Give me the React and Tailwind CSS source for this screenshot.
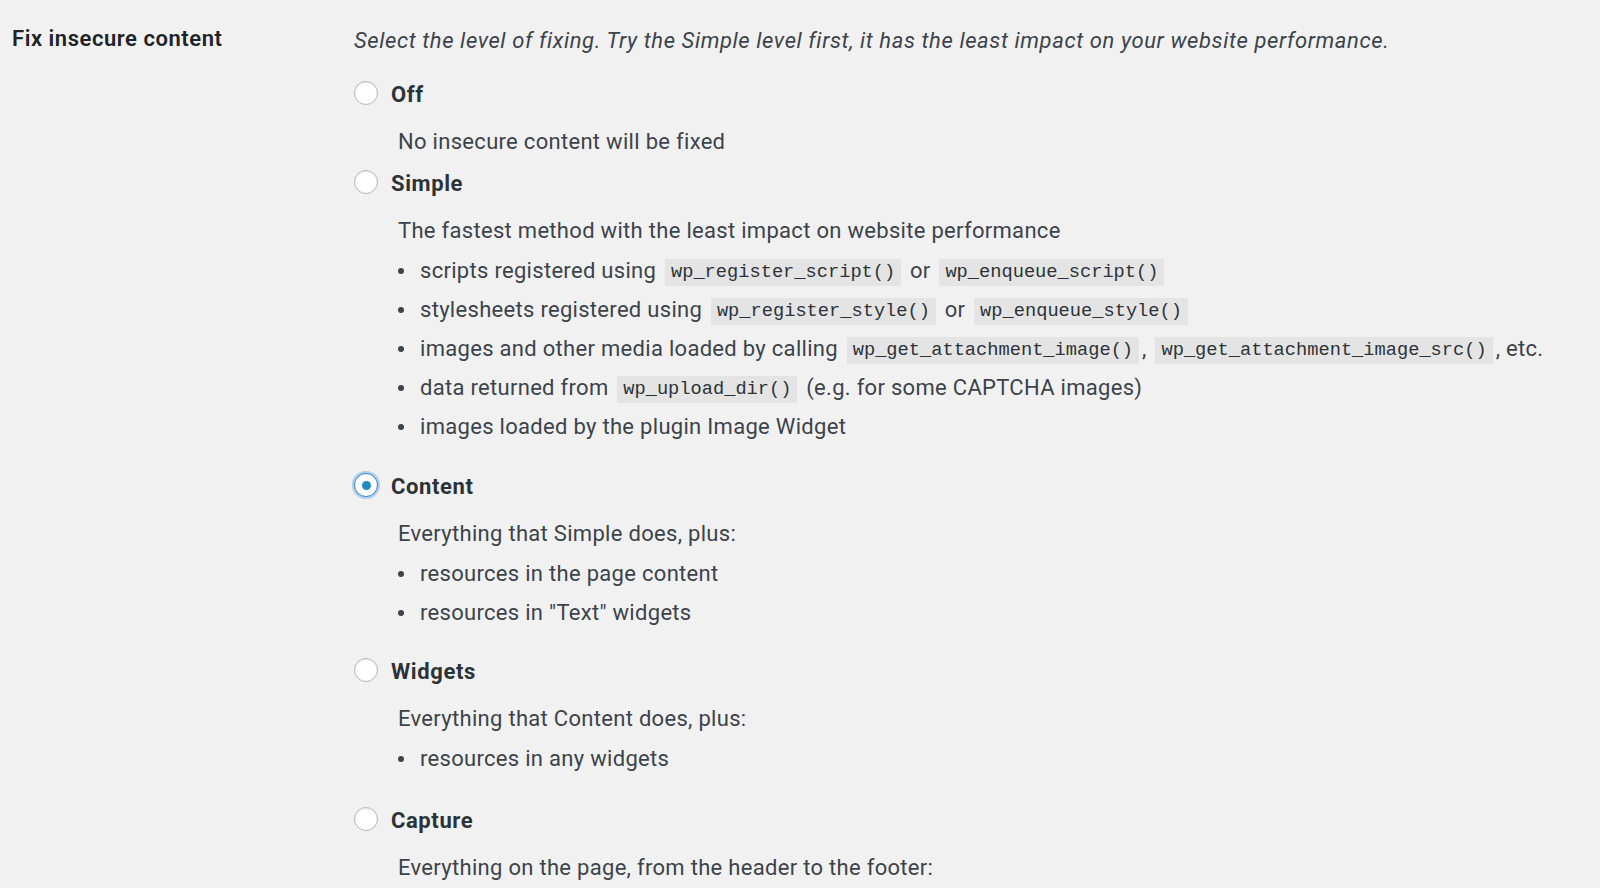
// Fix insecure content settings row

const Code = ({ children }) => (
  <code className="mx-[3px] inline-block h-[27px] bg-[#e4e4e4] px-[6px] align-middle font-['Liberation_Mono',monospace] text-[18.7px] leading-[27px] tracking-normal text-[#2c3338]">
    {children}
  </code>
);

const Radio = ({ checked }) =>
  checked ? (
    <span className="flex h-[24px] w-[24px] shrink-0 items-center justify-center rounded-full border border-[#3582c4] bg-white shadow-[0_0_0_2px_rgba(114,174,230,0.55)]">
      <span className="h-[9px] w-[9px] rounded-full bg-[#1e8cbe]" />
    </span>
  ) : (
    <span className="h-[24px] w-[24px] shrink-0 rounded-full border border-[#b4b6b9] bg-white shadow-[inset_0_1px_2px_rgba(0,0,0,0.08)]" />
  );

const Bullets = ({ items }) => (
  <ul className="ml-[44px]">
    {items.map((item, i) => (
      <li key={i} className="flex items-center leading-[39px]">
        <span className="mr-[16px] h-[6px] w-[6px] shrink-0 rounded-full bg-[#3c434a]" />
        <span>{item}</span>
      </li>
    ))}
  </ul>
);

function Option({ label, desc, items, checked, gap }) {
  return (
    <div className={gap}>
      <label className="flex h-[32px] items-center gap-[13px]">
        <Radio checked={checked} />
        <span className="pt-[3px] text-[22px] font-bold tracking-[0.6px] text-[#2c3338]">{label}</span>
      </label>
      <p className="ml-[44px] mt-[13px] leading-[40px]">{desc}</p>
      {items && <Bullets items={items} />}
    </div>
  );
}

export default function App() {
  const simpleItems = [
    <>scripts registered using <Code>wp_register_script()</Code> or <Code>wp_enqueue_script()</Code></>,
    <>stylesheets registered using <Code>wp_register_style()</Code> or <Code>wp_enqueue_style()</Code></>,
    <>images and other media loaded by calling <Code>wp_get_attachment_image()</Code>, <Code>wp_get_attachment_image_src()</Code>, etc.</>,
    <>data returned from <Code>wp_upload_dir()</Code> (e.g. for some CAPTCHA images)</>,
    <>images loaded by the plugin Image Widget</>,
  ];

  return (
    <div className="min-h-screen bg-[#f1f1f1] font-['Roboto',sans-serif] text-[22px] tracking-[0.3px] text-[#3c434a]">
      <div className="flex pt-[21px]">
        {/* Label column */}
        <div className="w-[354px] shrink-0 pl-[12px] text-[22px] font-semibold leading-[36px] tracking-[0.55px] text-[#1d2327]">
          Fix insecure content
        </div>

        {/* Options */}
        <div className="flex-1">
          <p className="italic leading-[40px] tracking-[0.6px] text-[#3c434a]">
            Select the level of fixing. Try the Simple level first, it has the least impact on your website performance.
          </p>

          <Option gap="mt-[16px]" label="Off" desc="No insecure content will be fixed" />
          <Option
            gap="mt-[4px]"
            label="Simple"
            desc="The fastest method with the least impact on website performance"
            items={simpleItems}
          />
          <Option
            gap="mt-[23px]"
            checked
            label="Content"
            desc="Everything that Simple does, plus:"
            items={['resources in the page content', 'resources in "Text" widgets']}
          />
          <Option
            gap="mt-[22px]"
            label="Widgets"
            desc="Everything that Content does, plus:"
            items={['resources in any widgets']}
          />
          <Option
            gap="mt-[25px]"
            label="Capture"
            desc="Everything on the page, from the header to the footer:"
          />
        </div>
      </div>
    </div>
  );
}
